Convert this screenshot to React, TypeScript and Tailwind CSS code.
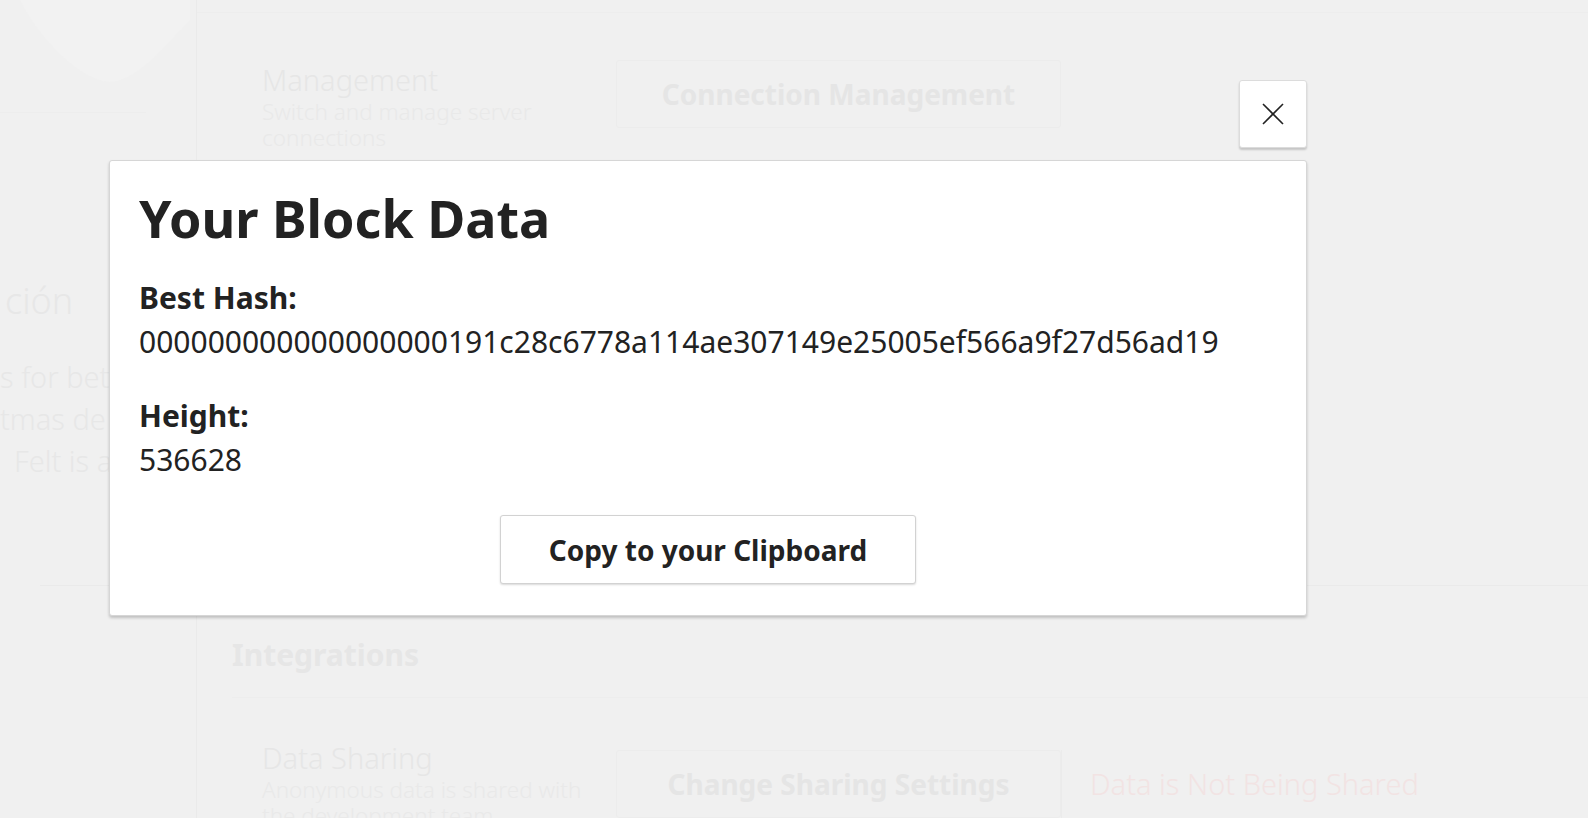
import React from "react";

const hash = "000000000000000000191c28c6778a114ae307149e25005ef566a9f27d56ad19";

const CloseIcon = () => (
  <svg width="22" height="22" viewBox="0 0 22 22" fill="none" stroke="#222" strokeWidth="1.6">
    <line x1="1" y1="1" x2="21" y2="21" />
    <line x1="21" y1="1" x2="1" y2="21" />
  </svg>
);

const SettingRow = ({
  title,
  desc,
  action,
  status,
  labelShift,
}: {
  title: string;
  desc: string;
  action: string;
  status?: string;
  labelShift: string;
}) => (
  <div className="flex items-start">
    <div className={`${labelShift} w-[354px] shrink-0`}>
      <div className="text-[29px] font-light leading-[34px] text-[#e6e6e6]">{title}</div>
      <div className="mt-[2px] w-[332px] text-[22.5px] font-light leading-[26px] text-[#e9e9e9]">{desc}</div>
    </div>
    <div className="flex h-[68px] w-[445px] shrink-0 items-center justify-center rounded-[3px] border border-[#ececec] text-[28px] font-bold text-[#e5e5e5]">
      {action}
    </div>
    {status && (
      <div className="flex h-[68px] items-center border-l border-[#ebebeb] pl-[28px] text-[29px] font-light text-[#f2e3e3]">
        {status}
      </div>
    )}
  </div>
);

const BackgroundPage = () => (
  <div className="flex h-full w-full">
    <aside className="w-[197px] shrink-0 border-r border-[#eaeaea]">
      <div className="h-[113px] w-[146px] border-b border-[#ededed]">
        <svg width="190" height="110" viewBox="0 0 190 110">
          <path d="M20 0 C40 40 80 80 110 82 C140 80 170 40 190 20 L190 0 Z" fill="#f2f2f2" />
        </svg>
      </div>
    </aside>
    <main className="flex flex-1 flex-col">
      <div className="h-[12px] shrink-0" />
      <div className="flex shrink-0 flex-col border-t border-[#ededed] pl-[65px]">
        <div className="mt-[47px]">
          <SettingRow
            title="Management"
            desc="Switch and manage server connections"
            action="Connection Management"
            labelShift="mt-[3px]"
          />
        </div>
      </div>
      <div className="ml-[-157px] mt-[434px] shrink-0 border-t border-[#eaeaea] pl-[192px]">
        <div className="mt-[51px] text-[30px] font-bold leading-[36px] text-[#e6e6e6]">Integrations</div>
        <div className="mt-[24px] border-t border-[#ededed]" />
        <div className="mt-[52px] pl-[30px]">
          <SettingRow
            title="Data Sharing"
            desc="Anonymous data is shared with the development team"
            action="Change Sharing Settings"
            status="Data is Not Being Shared"
            labelShift="-mt-[9px]"
          />
        </div>
      </div>
    </main>
  </div>
);

export default function App() {
  return (
    <div className="relative h-[818px] w-full overflow-hidden bg-[#f0f0f0] font-['Noto_Sans',sans-serif]">
      <BackgroundPage />

      {/* faded popover behind the dialog, only its left edge shows */}
      <div className="absolute left-0 top-[280px] w-[109px] overflow-hidden">
        <div className="flex flex-col whitespace-nowrap font-light text-[#e7e7e7]">
          <div className="pl-[5px] text-[36px] leading-[42px]">ción</div>
          <div className="mt-[34px] text-[29px] leading-[42px]">s for better</div>
          <div className="text-[29px] leading-[42px]">tmas de</div>
          <div className="pl-[14px] text-[29px] leading-[42px]">Felt is a</div>
        </div>
      </div>

      {/* close button */}
      <button className="absolute left-[1239px] top-[80px] flex h-[68px] w-[68px] items-center justify-center rounded-[3px] border border-[#dcdcdc] bg-white shadow-[0_2px_2px_rgba(0,0,0,0.18)]">
        <CloseIcon />
      </button>

      {/* dialog */}
      <div className="absolute left-[109px] top-[160px] flex h-[456px] w-[1198px] flex-col rounded-[3px] border border-[#d6d6d6] bg-white px-[29px] pt-[31px] text-[#222] shadow-[0_2px_3px_rgba(0,0,0,0.2)]">
        <h1 className="text-[52px] font-bold leading-[52px]">Your Block Data</h1>
        <div className="mt-[32px] text-[30px] leading-[44px]">
          <div className="font-bold">Best Hash:</div>
          <div>{hash}</div>
        </div>
        <div className="mt-[30px] text-[30px] leading-[44px]">
          <div className="font-bold">Height:</div>
          <div>536628</div>
        </div>
        <div className="mt-[33px] flex justify-center">
          <button className="h-[69px] w-[416px] rounded-[3px] border border-[#d2d2d2] bg-white text-[28px] font-bold text-[#222] shadow-[0_1px_2px_rgba(0,0,0,0.15)]">
            Copy to your Clipboard
          </button>
        </div>
      </div>
    </div>
  );
}
